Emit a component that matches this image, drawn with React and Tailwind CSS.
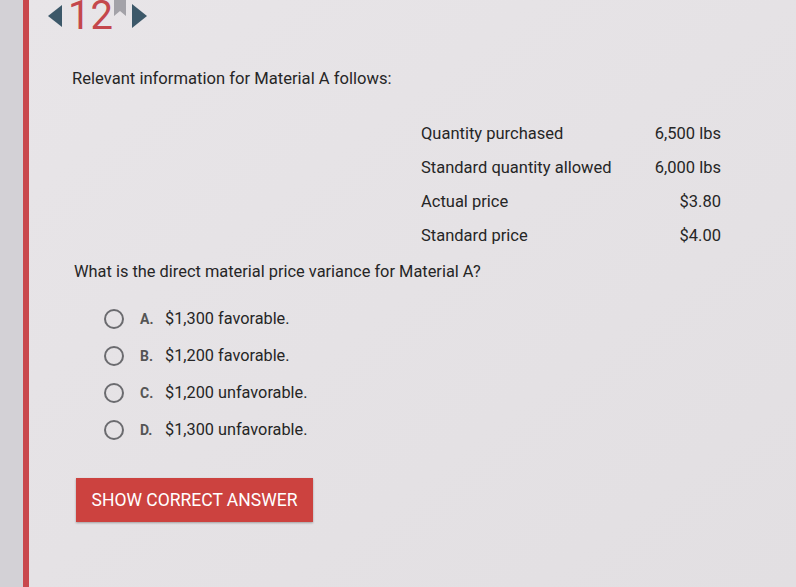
export default function App() {
  const rows = [
    ["Quantity purchased", "6,500 lbs"],
    ["Standard quantity allowed", "6,000 lbs"],
    ["Actual price", "$3.80"],
    ["Standard price", "$4.00"],
  ];
  const opts = [
    ["A.", "$1,300 favorable."],
    ["B.", "$1,200 favorable."],
    ["C.", "$1,200 unfavorable."],
    ["D.", "$1,300 unfavorable."],
  ];
  return (
    <div
      className="flex w-[796px] h-[587px] overflow-hidden bg-[#e5e2e5] text-[#262626]"
      style={{ fontFamily: "Roboto, 'Liberation Sans', sans-serif" }}
    >
      <div className="w-[23px] shrink-0 bg-[#d3d1d6]" />
      <div className="w-[6px] shrink-0 bg-[#c9484d]" />
      <div className="flex-1 flex flex-col bg-gradient-to-br from-[#e8e5e8] to-[#e2dfe2]">
        <div className="flex items-center h-[32px] pl-[19px]">
          <svg width="14" height="22" viewBox="0 0 14 22" className="mr-[6px]">
            <polygon points="14,0 14,22 0,11" fill="#3c5869" />
          </svg>
          <span className="text-[40px] leading-none text-[#c4474c] font-normal">12</span>
          <svg width="12" height="16" viewBox="0 0 12 16" className="self-start ml-[1px]">
            <polygon points="0,0 12,0 12,16 6,11 0,16" fill="#a3a2a8" />
          </svg>
          <svg width="15" height="24" viewBox="0 0 15 24" className="ml-[6px]">
            <polygon points="0,0 15,12 0,24" fill="#3c5869" />
          </svg>
        </div>
        <div className="pl-[43px] pt-[37px] text-[16.6px] leading-[20px]">
          Relevant information for Material A follows:
        </div>
        <div className="ml-[392px] mt-[35px] grid grid-cols-[233px_67px] gap-y-[14px] text-[16.5px] leading-[20px]">
          {rows.map(([l, v]) => (
            <div key={l} className="contents">
              <div>{l}</div>
              <div className="text-right">{v}</div>
            </div>
          ))}
        </div>
        <div className="pl-[45px] mt-[16px] text-[16.4px] leading-[20px]">
          What is the direct material price variance for Material A?
        </div>
        <div className="pl-[75px] mt-[27px] flex flex-col gap-[17px]">
          {opts.map(([k, t]) => (
            <div key={k} className="flex items-center h-[20px]">
              <div className="w-[20px] h-[20px] rounded-full border-2 border-[#6b6b6f]" />
              <span className="ml-[16px] w-[25px] text-[14px] font-bold text-[#555]">{k}</span>
              <span className="text-[16.3px] text-[#262626]">{t}</span>
            </div>
          ))}
        </div>
        <div className="pl-[47px] mt-[38px]">
          <div className="w-[237px] h-[44px] bg-[#cc423f] flex items-center justify-center text-white text-[17.5px] font-normal shadow-[0_1px_2px_rgba(0,0,0,0.3)]">
            SHOW CORRECT ANSWER
          </div>
        </div>
      </div>
    </div>
  );
}
